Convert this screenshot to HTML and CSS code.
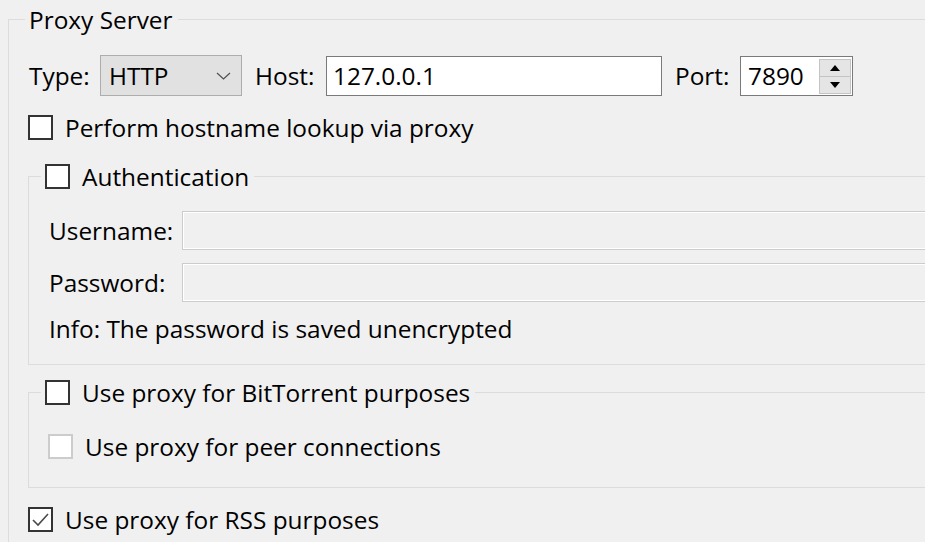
FILE: index.html
```html
<!DOCTYPE html>
<html>
<head>
<meta charset="utf-8">
<link rel="stylesheet" href="styles.css">
</head>
<body>
<div class="page">
  <div class="group outer">
    <div class="group-title"><span class="title-text">Proxy Server</span></div>
    <div class="outer-body">
      <div class="row1">
        <span class="lbl lbl-type">Type:</span>
        <div class="combo">
          <span class="combo-text">HTTP</span>
          <svg class="chev" width="15" height="8" viewBox="0 0 15 8"><path d="M1 1 L7.5 7 L14 1" fill="none" stroke="#505050" stroke-width="1.2"/></svg>
        </div>
        <span class="lbl lbl-host">Host:</span>
        <div class="input host">127.0.0.1</div>
        <span class="lbl lbl-port">Port:</span>
        <div class="spin">
          <span class="spin-text">7890</span>
          <div class="spin-btns">
            <div class="spin-btn"><svg width="10" height="6" viewBox="0 0 10 6"><path d="M0 6 L5 0 L10 6 Z" fill="#000"/></svg></div>
            <div class="spin-btn"><svg width="10" height="6" viewBox="0 0 10 6"><path d="M0 0 L10 0 L5 6 Z" fill="#000"/></svg></div>
          </div>
        </div>
      </div>

      <label class="check-row lookup"><span class="box"></span><span>Perform hostname lookup via proxy</span></label>

      <div class="group sub auth">
        <div class="group-title sub-title"><label class="check-row"><span class="box"></span><span>Authentication</span></label></div>
        <div class="auth-grid">
          <span class="lbl">Username:</span>
          <div class="field-disabled"></div>
          <span class="lbl">Password:</span>
          <div class="field-disabled"></div>
        </div>
        <div class="info">Info: The password is saved unencrypted</div>
      </div>

      <div class="group sub bt">
        <div class="group-title sub-title"><label class="check-row"><span class="box"></span><span>Use proxy for BitTorrent purposes</span></label></div>
        <label class="check-row peer"><span class="box disabled"></span><span>Use proxy for peer connections</span></label>
      </div>

      <label class="check-row rss"><span class="box"><svg width="21" height="21" viewBox="0 0 21 21"><path d="M3 11 L8 16 L18 5" fill="none" stroke="#4a4a4a" stroke-width="1.6"/></svg></span><span>Use proxy for RSS purposes</span></label>
    </div>
  </div>
</div>
</body>
</html>
```

FILE: styles.css
```css
html, body {
  margin: 0;
  padding: 0;
  background: #f0f0f0;
}
body {
  font-family: "Open Sans", "Noto Sans", sans-serif;
  font-size: 24.4px;
  color: #000;
}
.page {
  width: 925px;
  height: 542px;
  overflow: hidden;
}
.group {
  border-top: 1px solid #dcdcdc;
  border-left: 1px solid #dcdcdc;
}
.outer {
  margin: 19px 0 0 8px;
  width: 1300px;
  height: 600px;
}
.group-title {
  height: 30px;
  line-height: 30px;
  margin-top: -15px;
  margin-left: 16px;
  display: flex;
}
.title-text {
  background: #f0f0f0;
  padding: 0 5px 0 4px;
}
.outer-body {
  padding-left: 19px;
}
.row1 {
  display: flex;
  align-items: center;
  margin-top: 20px;
  margin-left: 1px;
  height: 41px;
}
.lbl {
  white-space: nowrap;
}
.lbl-type { width: 71px; }
.lbl-host { width: 71px; margin-left: 13px; }
.lbl-port { width: 65px; margin-left: 13px; }
.combo {
  box-sizing: border-box;
  width: 142px;
  height: 41px;
  background: #e1e1e1;
  border: 1px solid #adadad;
  display: flex;
  align-items: center;
  padding-left: 8px;
}
.combo-text { flex: 1; }
.chev { margin-right: 10px; }
.input {
  box-sizing: border-box;
  height: 40px;
  background: #fff;
  border: 1px solid #7a7a7a;
  display: flex;
  align-items: center;
}
.host {
  width: 336px;
  padding-left: 6px;
}
.spin {
  box-sizing: border-box;
  width: 113px;
  height: 40px;
  background: #fff;
  border: 1px solid #7a7a7a;
  display: flex;
  align-items: center;
}
.spin-text {
  flex: 1;
  padding-left: 7px;
}
.spin-btns {
  align-self: stretch;
  width: 30px;
  margin: 2px 1px 1px 0;
  display: flex;
  flex-direction: column;
  border: 1px solid #c4c4c4;
  background: #e5e5e5;
}
.spin-btn {
  flex: 1;
  display: flex;
  align-items: center;
  justify-content: center;
}
.spin-btn + .spin-btn {
  border-top: 1px solid #c4c4c4;
}
.check-row {
  display: flex;
  align-items: center;
  height: 25px;
  line-height: 25px;
  white-space: nowrap;
}
.box {
  box-sizing: border-box;
  width: 25px;
  height: 25px;
  border: 2px solid #333;
  background: #fff;
  margin-right: 12px;
  flex: none;
  display: flex;
  align-items: center;
  justify-content: center;
}
.box.disabled {
  border-color: #cccccc;
}
.lookup {
  margin-top: 19px;
}
.sub {
  margin-left: 0;
  margin-right: 0;
  border-bottom: 1px solid #dcdcdc;
}
.sub-title {
  height: 25px;
  line-height: 25px;
  margin-top: -13px;
  margin-left: 12px;
}
.sub-title .check-row {
  background: #f0f0f0;
  padding: 0 5px 0 4px;
}
.auth {
  margin-top: 36px;
  padding-bottom: 20px;
}
.auth-grid {
  display: grid;
  grid-template-columns: 133px 1fr;
  row-gap: 13px;
  align-items: center;
  margin-top: 22px;
  padding-left: 20px;
}
.field-disabled {
  box-sizing: border-box;
  height: 39px;
  border: 1px solid #cccccc;
  box-shadow: inset 0 0 0 1px #ffffff;
  background: #f0f0f0;
}
.info {
  padding-left: 20px;
  margin-top: 12px;
  line-height: 30px;
}
.bt {
  margin-top: 27px;
  padding-bottom: 28px;
}
.peer {
  margin-top: 29px;
  margin-left: 19px;
}
.rss {
  margin-top: 19px;
}
```
